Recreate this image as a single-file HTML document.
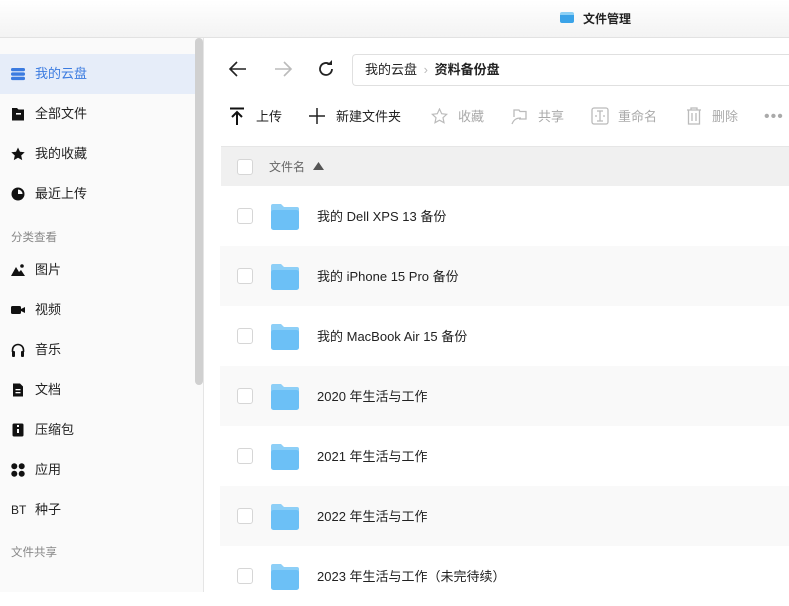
<!DOCTYPE html>
<html><head><meta charset="utf-8"><style>
*{margin:0;padding:0;box-sizing:border-box}
body{width:789px;height:592px;overflow:hidden;background:#fff;font-family:"Liberation Sans","Noto Sans CJK SC",sans-serif;font-size:13px;color:#222;position:relative}
.title{position:absolute;left:0;top:0;width:789px;height:38px;background:linear-gradient(#fff,#f3f3f3);border-bottom:1px solid #e2e2e2}
.title span{position:absolute;left:583px;top:10px;font-size:12px;font-weight:bold;color:#222}
.ticon{position:absolute;left:560px;top:12px;width:14px;height:11px;background:#3aa3e8;border-radius:2px;border-top:3px solid #8cd0f5}
.side{position:absolute;left:0;top:38px;width:204px;height:554px;background:#fafafa;border-right:1px solid #e5e5e5}
.sb{position:absolute;left:195px;top:38px;width:8px;height:347px;background:#d0d0d0;border-radius:4px}
.it{position:absolute;left:0;width:195px;height:40px;line-height:40px;padding-left:35px;font-size:13px;color:#222}
.it.act{background:#e6edf9;color:#3b7be0}
.ic{position:absolute;left:11px;top:13px;width:14px;height:14px}
.cat{position:absolute;left:11px;font-size:11.5px;color:#888}
.nav{position:absolute;top:57px;width:24px;height:24px}
.bc{position:absolute;left:352px;top:54px;width:437px;height:32px;border:1px solid #e0e0e0;border-right:none;border-radius:4px 0 0 4px;line-height:30px;padding-left:12px;font-size:13px}
.tb{position:absolute;top:107px;font-size:13px;line-height:20px}
.g{color:#aaa}
.hdr{position:absolute;left:221px;top:146px;width:568px;height:40px;background:#f0f0f0;border-top:1px solid #e6e6e6}
.cb{position:absolute;width:16px;height:16px;border:1px solid #d6d6d6;border-radius:3px;background:#fff}
.row{position:absolute;left:220px;width:569px;height:60px}
.row.a{background:#f9f9f9}
.fold{position:absolute;left:51px;top:16px;width:28px;height:28px}
.nm{position:absolute;left:97px;top:20px;font-size:13px;color:#222}
</style></head><body>
<div class="title"><div class="ticon"></div><span>文件管理</span></div>
<div class="side">
<div class="it act" style="top:16px"><svg class="ic" viewBox="0 0 14 14"><rect x="0" y="1" width="14" height="3.3" rx="1.5" fill="#3b7be0"/><rect x="0" y="5.4" width="14" height="3.3" rx="1.5" fill="#3b7be0"/><rect x="0" y="9.8" width="14" height="3.3" rx="1.5" fill="#3b7be0"/></svg>我的云盘</div>
<div class="it" style="top:56px"><svg class="ic" viewBox="0 0 14 14"><path d="M1 1h5l1.5 1.5H13v11H1z" fill="#111"/><rect x="5" y="6" width="5" height="1.6" fill="#fafafa"/></svg>全部文件</div>
<div class="it" style="top:96px"><svg class="ic" viewBox="0 0 14 14"><path d="M7 0.5l2 4.3 4.7.5-3.5 3.2 1 4.6L7 10.8 2.8 13.1l1-4.6L.3 5.3 5 4.8z" fill="#111"/></svg>我的收藏</div>
<div class="it" style="top:136px"><svg class="ic" viewBox="0 0 14 14"><circle cx="7" cy="7" r="6.5" fill="#111"/><path d="M7 7V2.5A4.5 4.5 0 0 1 11.5 7z" fill="#fafafa"/></svg>最近上传</div>
<div class="cat" style="top:191px">分类查看</div>
<div class="it" style="top:212px"><svg class="ic" viewBox="0 0 14 14"><path d="M0 13L5 4l3 5 2-2 4 6z" fill="#111"/><circle cx="11" cy="3" r="1.8" fill="#111"/></svg>图片</div>
<div class="it" style="top:252px"><svg class="ic" viewBox="0 0 14 14"><rect x="0" y="3" width="10" height="8" rx="1.5" fill="#111"/><path d="M10 6l4-2v6l-4-2z" fill="#111"/></svg>视频</div>
<div class="it" style="top:292px"><svg class="ic" viewBox="0 0 14 14"><path d="M1.5 9V7a5.5 5.5 0 0 1 11 0v2" stroke="#111" stroke-width="1.6" fill="none"/><rect x="1" y="8" width="3" height="6" rx="1" fill="#111"/><rect x="10" y="8" width="3" height="6" rx="1" fill="#111"/></svg>音乐</div>
<div class="it" style="top:332px"><svg class="ic" viewBox="0 0 14 14"><path d="M2 0.5h7l3 3v10H2z" fill="#111"/><rect x="4.5" y="6" width="5" height="1.3" fill="#fafafa"/><rect x="4.5" y="9" width="5" height="1.3" fill="#fafafa"/></svg>文档</div>
<div class="it" style="top:372px"><svg class="ic" viewBox="0 0 14 14"><rect x="1.5" y="0.5" width="11" height="13" rx="1.5" fill="#111"/><rect x="6" y="2" width="2" height="2" fill="#fafafa"/><rect x="6" y="6" width="2" height="4" fill="#fafafa"/></svg>压缩包</div>
<div class="it" style="top:412px"><svg class="ic" viewBox="0 0 14 14"><circle cx="3.3" cy="3.3" r="3" fill="#111"/><circle cx="10.7" cy="3.3" r="3" fill="#111"/><circle cx="3.3" cy="10.7" r="3" fill="#111"/><circle cx="10.7" cy="10.7" r="3" fill="#111"/></svg>应用</div>
<div class="it" style="top:452px"><span style="position:absolute;left:11px;font-size:12px">BT</span>种子</div>
<div class="cat" style="top:506px">文件共享</div>
</div>
<div class="sb"></div>
<svg class="nav" style="left:226px" viewBox="0 0 24 24"><path d="M20 12H4M11 5l-7 7 7 7" stroke="#222" stroke-width="1.6" fill="none"/></svg>
<svg class="nav" style="left:271px" viewBox="0 0 24 24"><path d="M4 12h16M13 5l7 7-7 7" stroke="#bbb" stroke-width="1.6" fill="none"/></svg>
<svg class="nav" style="left:314px" viewBox="0 0 24 24"><path d="M18 12a6 6 0 1 1-2-4.5" stroke="#222" stroke-width="1.8" fill="none"/><path d="M13 5h5V0z" fill="#222" transform="translate(0 3)"/></svg>
<div class="bc">我的云盘 <span style="color:#bbb;margin:0 3px">›</span> <b>资料备份盘</b></div>
<svg style="position:absolute;left:229px;top:107px" width="16" height="18" viewBox="0 0 16 18"><path d="M1 1.5h14M8 18V5M3 10l5-5 5 5" stroke="#111" stroke-width="2" fill="none"/></svg>
<div class="tb" style="left:256px">上传</div>
<svg style="position:absolute;left:309px;top:108px" width="16" height="16"><path d="M8 0v16M0 8h16" stroke="#222" stroke-width="1.5"/></svg>
<div class="tb" style="left:336px">新建文件夹</div>
<svg style="position:absolute;left:431px;top:108px" width="17" height="17" viewBox="0 0 17 17"><path d="M8.5 1l2.2 4.7 5 .6-3.7 3.4 1 5L8.5 12.2 4 14.7l1-5L1.3 6.3l5-.6z" stroke="#bbb" stroke-width="1.2" fill="none"/></svg>
<div class="tb g" style="left:458px">收藏</div>
<svg style="position:absolute;left:511px;top:108px" width="18" height="17" viewBox="0 0 18 17"><path d="M3 9V2h5l1 1.5h6V11H8" stroke="#bbb" stroke-width="1.3" fill="none"/><path d="M1 16c2-5 5-6 9-6" stroke="#bbb" stroke-width="1.3" fill="none"/></svg>
<div class="tb g" style="left:538px">共享</div>
<svg style="position:absolute;left:591px;top:107px" width="18" height="18" viewBox="0 0 18 18"><rect x="1" y="1" width="16" height="16" rx="2" stroke="#bbb" stroke-width="1.3" fill="none"/><path d="M9 4v10M6 4h6M6 14h6M4 9h2M12 9h2" stroke="#bbb" stroke-width="1.3"/></svg>
<div class="tb g" style="left:618px">重命名</div>
<svg style="position:absolute;left:686px;top:107px" width="16" height="18" viewBox="0 0 16 18"><path d="M1 3h14M5 3V1h6v2M2.5 3v14h11V3M6 6v8M10 6v8" stroke="#bbb" stroke-width="1.3" fill="none"/></svg>
<div class="tb g" style="left:712px">删除</div>
<div class="tb g" style="left:764px;font-size:16px;letter-spacing:1px">•••</div>
<div class="hdr"><div class="cb" style="left:16px;top:12px"></div><span style="position:absolute;left:48px;top:11px;font-size:12px;color:#666">文件名</span><svg style="position:absolute;left:92px;top:15px" width="11" height="8"><path d="M0 8L5.5 0 11 8z" fill="#555"/></svg></div>
<div class="row" style="top:186px"><div class="cb" style="left:17px;top:22px"></div><svg class="fold" viewBox="0 0 28 28"><path d="M0 4a2 2 0 0 1 2-2h8l3 3h13a2 2 0 0 1 2 2v18a2 2 0 0 1-2 2H2a2 2 0 0 1-2-2z" fill="#8dcff7"/><rect x="0" y="8" width="28" height="20" rx="2.5" fill="#6cc0f6"/></svg><div class="nm">我的 Dell XPS 13 备份</div></div>
<div class="row a" style="top:246px"><div class="cb" style="left:17px;top:22px"></div><svg class="fold" viewBox="0 0 28 28"><path d="M0 4a2 2 0 0 1 2-2h8l3 3h13a2 2 0 0 1 2 2v18a2 2 0 0 1-2 2H2a2 2 0 0 1-2-2z" fill="#8dcff7"/><rect x="0" y="8" width="28" height="20" rx="2.5" fill="#6cc0f6"/></svg><div class="nm">我的 iPhone 15 Pro 备份</div></div>
<div class="row" style="top:306px"><div class="cb" style="left:17px;top:22px"></div><svg class="fold" viewBox="0 0 28 28"><path d="M0 4a2 2 0 0 1 2-2h8l3 3h13a2 2 0 0 1 2 2v18a2 2 0 0 1-2 2H2a2 2 0 0 1-2-2z" fill="#8dcff7"/><rect x="0" y="8" width="28" height="20" rx="2.5" fill="#6cc0f6"/></svg><div class="nm">我的 MacBook Air 15 备份</div></div>
<div class="row a" style="top:366px"><div class="cb" style="left:17px;top:22px"></div><svg class="fold" viewBox="0 0 28 28"><path d="M0 4a2 2 0 0 1 2-2h8l3 3h13a2 2 0 0 1 2 2v18a2 2 0 0 1-2 2H2a2 2 0 0 1-2-2z" fill="#8dcff7"/><rect x="0" y="8" width="28" height="20" rx="2.5" fill="#6cc0f6"/></svg><div class="nm">2020 年生活与工作</div></div>
<div class="row" style="top:426px"><div class="cb" style="left:17px;top:22px"></div><svg class="fold" viewBox="0 0 28 28"><path d="M0 4a2 2 0 0 1 2-2h8l3 3h13a2 2 0 0 1 2 2v18a2 2 0 0 1-2 2H2a2 2 0 0 1-2-2z" fill="#8dcff7"/><rect x="0" y="8" width="28" height="20" rx="2.5" fill="#6cc0f6"/></svg><div class="nm">2021 年生活与工作</div></div>
<div class="row a" style="top:486px"><div class="cb" style="left:17px;top:22px"></div><svg class="fold" viewBox="0 0 28 28"><path d="M0 4a2 2 0 0 1 2-2h8l3 3h13a2 2 0 0 1 2 2v18a2 2 0 0 1-2 2H2a2 2 0 0 1-2-2z" fill="#8dcff7"/><rect x="0" y="8" width="28" height="20" rx="2.5" fill="#6cc0f6"/></svg><div class="nm">2022 年生活与工作</div></div>
<div class="row" style="top:546px"><div class="cb" style="left:17px;top:22px"></div><svg class="fold" viewBox="0 0 28 28"><path d="M0 4a2 2 0 0 1 2-2h8l3 3h13a2 2 0 0 1 2 2v18a2 2 0 0 1-2 2H2a2 2 0 0 1-2-2z" fill="#8dcff7"/><rect x="0" y="8" width="28" height="20" rx="2.5" fill="#6cc0f6"/></svg><div class="nm">2023 年生活与工作（未完待续）</div></div>
</body></html>
